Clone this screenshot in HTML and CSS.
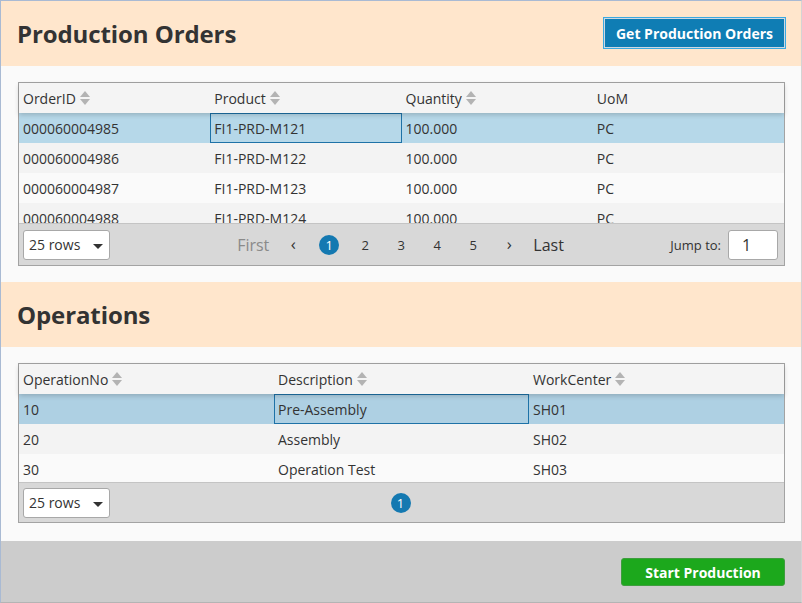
FILE: index.html
```html
<!DOCTYPE html>
<html lang="en">
<head>
    <meta charset="UTF-8">
    <meta name="viewport" content="width=device-width, initial-scale=1.0">
    <title>Production</title>
    <link rel="stylesheet" href="styles.css">
</head>
<body>
<div class="app">

    <!-- Production Orders -->
    <div class="banda">
        <h1>Production Orders</h1>
        <button class="btn-azul">Get Production Orders</button>
    </div>
    <div class="conteudo">
        <div class="grade">
            <div class="linha cabecalho col4">
                <div class="cel">OrderID <span class="ordem"></span></div>
                <div class="cel">Product <span class="ordem"></span></div>
                <div class="cel">Quantity <span class="ordem"></span></div>
                <div class="cel">UoM</div>
            </div>
            <div class="corpo corpo-pedidos">
                <div class="linha col4 selecionada">
                    <div class="cel">000060004985</div>
                    <div class="cel foco">FI1-PRD-M121</div>
                    <div class="cel">100.000</div>
                    <div class="cel">PC</div>
                </div>
                <div class="linha col4">
                    <div class="cel">000060004986</div>
                    <div class="cel">FI1-PRD-M122</div>
                    <div class="cel">100.000</div>
                    <div class="cel">PC</div>
                </div>
                <div class="linha col4">
                    <div class="cel">000060004987</div>
                    <div class="cel">FI1-PRD-M123</div>
                    <div class="cel">100.000</div>
                    <div class="cel">PC</div>
                </div>
                <div class="linha col4">
                    <div class="cel">000060004988</div>
                    <div class="cel">FI1-PRD-M124</div>
                    <div class="cel">100.000</div>
                    <div class="cel">PC</div>
                </div>
            </div>
            <div class="paginacao">
                <div class="linhas">25 rows <span class="seta"></span></div>
                <div class="paginas">
                    <span class="fim desativado">First</span>
                    <span class="pag seta-pag">&lsaquo;</span>
                    <span class="pag atual">1</span>
                    <span class="pag">2</span>
                    <span class="pag">3</span>
                    <span class="pag">4</span>
                    <span class="pag">5</span>
                    <span class="pag seta-pag ultima">&rsaquo;</span>
                    <span class="fim">Last</span>
                </div>
                <div class="pular">
                    <span>Jump to:</span>
                    <div class="campo">1</div>
                </div>
            </div>
        </div>
    </div>

    <!-- Operations -->
    <div class="banda">
        <h1>Operations</h1>
    </div>
    <div class="conteudo conteudo-op">
        <div class="grade">
            <div class="linha cabecalho col3">
                <div class="cel">OperationNo <span class="ordem"></span></div>
                <div class="cel">Description <span class="ordem"></span></div>
                <div class="cel">WorkCenter <span class="ordem"></span></div>
            </div>
            <div class="corpo corpo-op">
                <div class="linha col3 selecionada op">
                    <div class="cel">10</div>
                    <div class="cel foco">Pre-Assembly</div>
                    <div class="cel">SH01</div>
                </div>
                <div class="linha col3">
                    <div class="cel">20</div>
                    <div class="cel">Assembly</div>
                    <div class="cel">SH02</div>
                </div>
                <div class="linha col3">
                    <div class="cel">30</div>
                    <div class="cel">Operation Test</div>
                    <div class="cel">SH03</div>
                </div>
            </div>
            <div class="paginacao pag-op">
                <div class="linhas">25 rows <span class="seta"></span></div>
                <div class="paginas">
                    <span class="pag atual">1</span>
                </div>
                <div></div>
            </div>
        </div>
    </div>

    <!-- Rodapé -->
    <div class="rodape">
        <button class="btn-verde">Start Production</button>
    </div>

</div>
</body>
</html>
```

FILE: styles.css
```css
* {
    box-sizing: border-box;
}
body {
    margin: 0;
    font-family: "Open Sans", "Liberation Sans", sans-serif;
    color: #333;
}
.app {
    width: 802px;
    height: 603px;
    border-top: 1px solid #a9bad3;
    border-left: 1px solid #a9bad3;
    border-right: 1px solid #d4d4d4;
    border-bottom: 1px solid #b4b4b4;
    background-color: #fafafa;
    overflow: hidden;
}
.banda {
    height: 65px;
    background-color: #ffe6cc;
    display: flex;
    align-items: center;
    justify-content: space-between;
    padding: 0 16px 0 16px;
}
.banda h1 {
    margin: 0;
    font-size: 24px;
    font-weight: bold;
    letter-spacing: -0.1px;
    color: #333;
}
.btn-azul {
    height: 30px;
    padding: 0 11px;
    background-color: #0f7db4;
    color: #fff;
    font-family: inherit;
    font-size: 14px;
    font-weight: bold;
    border: 1px solid #cfd9e2;
    outline: 1px solid #3ba9e0;
    margin-top: -1px;
}
.conteudo {
    padding: 16px 16px 16px 17px;
}
.conteudo-op {
    padding-bottom: 18px;
}
.grade {
    border: 1px solid #a3a3a3;
    background-color: #fafafa;
}
.linha {
    display: grid;
    height: 30px;
    font-size: 14px;
}
.col4 {
    grid-template-columns: repeat(4, 1fr);
}
.col3 {
    grid-template-columns: repeat(3, 1fr);
}
.cel {
    display: flex;
    align-items: center;
    padding-left: 4px;
    white-space: nowrap;
}
.cabecalho {
    background-color: #f4f4f4;
    position: relative;
    z-index: 1;
    box-shadow: 0 2px 5px rgba(0, 0, 0, 0.18);
}
.ordem {
    display: inline-block;
    width: 10px;
    height: 14px;
    margin-left: 4px;
    position: relative;
}
.ordem::before,
.ordem::after {
    content: "";
    position: absolute;
    left: 0;
    border-left: 5px solid transparent;
    border-right: 5px solid transparent;
}
.ordem::before {
    top: 0;
    border-bottom: 6px solid #b3b3b3;
}
.ordem::after {
    bottom: 0;
    border-top: 6px solid #b3b3b3;
}
.corpo {
    overflow: hidden;
}
.corpo-pedidos {
    height: 110px;
}
.corpo-op {
    height: 88px;
}
.corpo .linha:nth-child(even) {
    background-color: #f3f3f3;
}
.corpo .linha:nth-child(odd) {
    background-color: #fafafa;
}
.corpo .linha.selecionada {
    background-color: #b6d8e9;
}
.corpo .linha.selecionada.op {
    background-color: #aed0e3;
}
.foco {
    border: 1px solid #1e72a7;
    padding-left: 3px;
}
.paginacao {
    height: 42px;
    background-color: #d8d8d8;
    border-top: 1px solid #c4c4c4;
    display: grid;
    grid-template-columns: 1fr auto 1fr;
    align-items: center;
    padding: 0 6px 0 4px;
}
.pag-op {
    height: 40px;
}
.linhas {
    width: 87px;
    height: 30px;
    background-color: #fff;
    border: 1px solid #a8a8a8;
    border-radius: 3px;
    font-size: 14px;
    display: flex;
    align-items: center;
    padding-left: 5px;
    position: relative;
}
.seta {
    position: absolute;
    right: 6px;
    top: 13px;
    border-left: 5px solid transparent;
    border-right: 5px solid transparent;
    border-top: 5px solid #333;
}
.paginas {
    display: flex;
    align-items: center;
}
.fim {
    font-size: 16px;
    color: #333;
}
.fim.desativado {
    color: #8a8a8a;
    margin-right: 6px;
}
.pag {
    width: 20px;
    height: 20px;
    margin: 0 8px;
    font-size: 13px;
    display: flex;
    align-items: center;
    justify-content: center;
}
.seta-pag {
    font-size: 17px;
    padding-bottom: 3px;
}
.pag.ultima {
    margin-right: 14px;
}
.pag.atual {
    background-color: #1479b1;
    color: #fff;
    border-radius: 50%;
}
.pular {
    justify-self: end;
    display: flex;
    align-items: center;
    font-size: 13px;
}
.campo {
    width: 50px;
    height: 30px;
    margin-left: 7px;
    background-color: #fff;
    border: 1px solid #a8a8a8;
    border-radius: 3px;
    font-size: 16px;
    display: flex;
    align-items: center;
    padding-left: 13px;
}
.rodape {
    height: 61px;
    background-color: #cccccc;
    display: flex;
    align-items: center;
    justify-content: flex-end;
    padding-right: 16px;
}
.btn-verde {
    width: 164px;
    height: 28px;
    margin-top: 1px;
    background-color: #1ca81c;
    color: #fff;
    font-family: inherit;
    font-size: 14px;
    font-weight: bold;
    border: 1px solid #3e9d3e;
    border-radius: 3px;
}
```
